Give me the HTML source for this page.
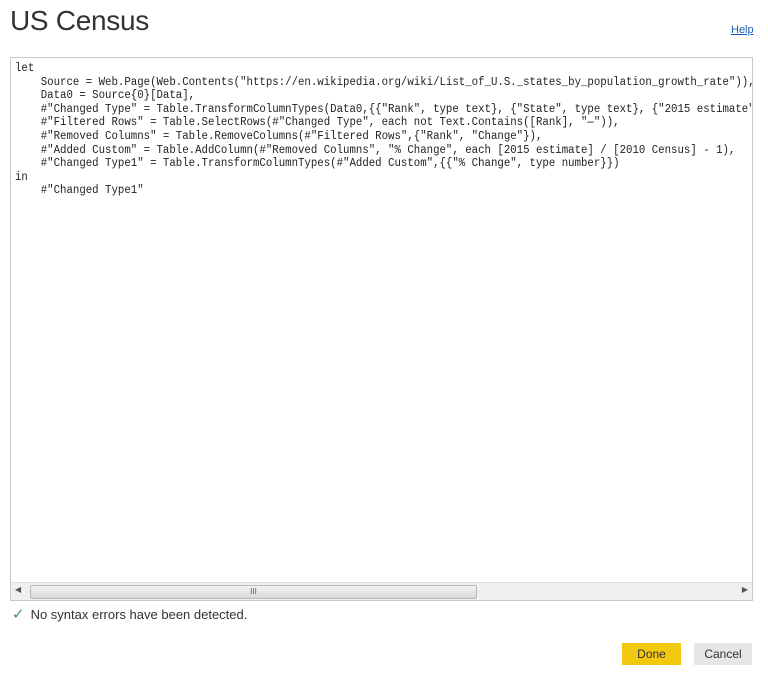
<!DOCTYPE html>
<html><head><style>
body{margin:0;width:768px;height:679px;background:#fff;font-family:"Liberation Sans",sans-serif;position:relative;overflow:hidden}
.t{position:absolute;left:10px;top:1px;font-size:28px;color:#333;font-weight:300;letter-spacing:-0.3px;line-height:40px}
.help{position:absolute;left:731px;top:24px;font-size:11px;color:#1a5fb4;text-decoration:underline}
.ed{position:absolute;left:10px;top:57px;width:741px;height:542px;border:1px solid #c8c8c8;background:#fff;overflow:hidden}
pre{margin:0;position:absolute;left:4px;top:4px;font-family:"Liberation Mono",monospace;font-size:11.5px;line-height:13.6px;color:#222;white-space:pre;transform:scaleX(0.932);transform-origin:0 0}
.sb{position:absolute;left:0;bottom:0;width:741px;height:17px;background:#f0f0f0;border-top:1px solid #e0e0e0}
.th{position:absolute;left:19px;top:2px;width:445px;height:12px;background:linear-gradient(#f4f4f4,#d8d8d8);border:1px solid #b8b8b8;border-radius:2px;font-size:8px;text-align:center;line-height:12px;color:#555}
.ok{position:absolute;left:12px;top:605px;font-size:13px;color:#333}
.btn{position:absolute;top:643px;height:22px;line-height:22px;font-size:12px;text-align:center;color:#333}
</style></head><body>
<div class="t">US Census</div>
<div class="help">Help</div>
<div class="ed"><pre>let
    Source = Web.Page(Web.Contents("https://en.wikipedia.org/wiki/List_of_U.S._states_by_population_growth_rate")),
    Data0 = Source{0}[Data],
    #"Changed Type" = Table.TransformColumnTypes(Data0,{{"Rank", type text}, {"State", type text}, {"2015 estimate", Int64.Type}}),
    #"Filtered Rows" = Table.SelectRows(#"Changed Type", each not Text.Contains([Rank], "—")),
    #"Removed Columns" = Table.RemoveColumns(#"Filtered Rows",{"Rank", "Change"}),
    #"Added Custom" = Table.AddColumn(#"Removed Columns", "% Change", each [2015 estimate] / [2010 Census] - 1),
    #"Changed Type1" = Table.TransformColumnTypes(#"Added Custom",{{"% Change", type number}})
in
    #"Changed Type1"</pre>
<div class="sb"><span style="position:absolute;left:4px;top:2px;font-size:8px;color:#555">◀</span><div class="th">III</div><span style="position:absolute;right:4px;top:2px;font-size:8px;color:#555">▶</span></div>
</div>
<div class="ok"><span style="color:#3a9a6e;font-size:15px;margin-right:6px">✓</span>No syntax errors have been detected.</div>
<div class="btn" style="left:622px;width:59px;background:#f2c811">Done</div>
<div class="btn" style="left:694px;width:58px;background:#e6e6e6">Cancel</div>
</body></html>
